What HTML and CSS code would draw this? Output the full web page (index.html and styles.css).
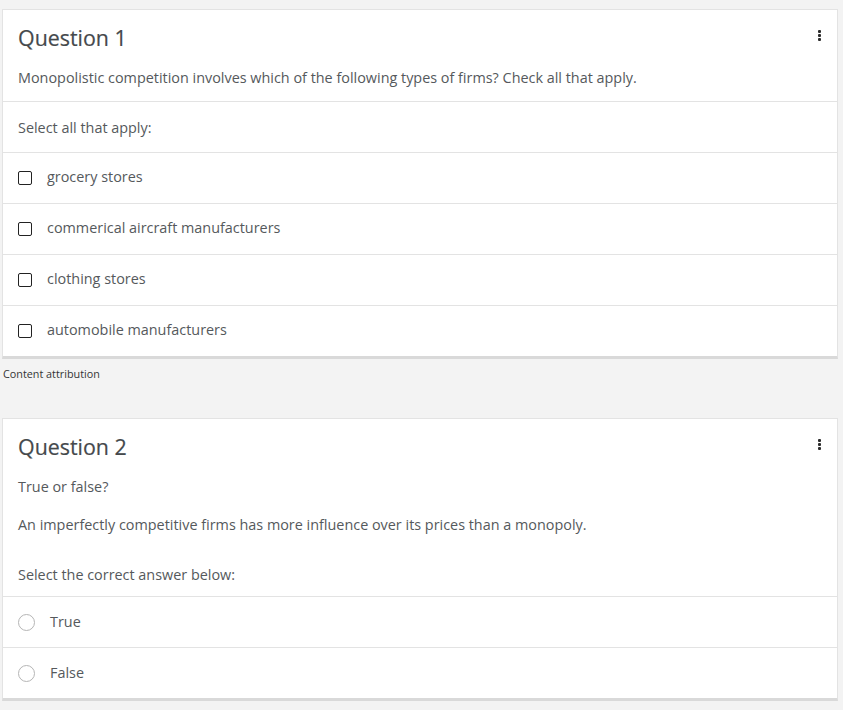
FILE: index.html
```html
<!DOCTYPE html>
<html lang="en">

<head>
    <meta charset="UTF-8">
    <meta name="viewport" content="width=device-width, initial-scale=1.0">
    <title>Quiz</title>
    <link rel="stylesheet" href="styles.css">
</head>

<body>

    <div class="question-card">
        <div class="question-head">
            <div class="title-row">
                <h2>Question 1</h2>
                <span class="kebab"><i></i><i></i><i></i></span>
            </div>
            <p class="prompt">Monopolistic competition involves which of the following types of firms? Check all that apply.</p>
        </div>
        <div class="row instruction">Select all that apply:</div>
        <label class="row option"><span class="box"></span>grocery stores</label>
        <label class="row option"><span class="box"></span>commerical aircraft manufacturers</label>
        <label class="row option"><span class="box"></span>clothing stores</label>
        <label class="row option"><span class="box"></span>automobile manufacturers</label>
    </div>
    <div class="attribution">Content attribution</div>

    <div class="question-card second">
        <div class="question-head">
            <div class="title-row">
                <h2>Question 2</h2>
                <span class="kebab"><i></i><i></i><i></i></span>
            </div>
            <p class="prompt">True or false?</p>
            <p class="prompt statement">An imperfectly competitive firms has more influence over its prices than a monopoly.</p>
            <p class="prompt select-note">Select the correct answer below:</p>
        </div>
        <label class="row option radio-option"><span class="circle"></span>True</label>
        <label class="row option radio-option"><span class="circle"></span>False</label>
    </div>

</body>

</html>
```

FILE: styles.css
```css
body {
    font-family: "Open Sans", Arial, sans-serif;
    background-color: #f3f3f3;
    color: #55595c;
    margin: 0;
    padding: 9px 5px 0 2px;
}

.question-card {
    background-color: #fff;
    border: 1px solid #e3e3e3;
    border-bottom: 3px solid #d9d9d9;
}

.question-card.second {
    margin-top: 37px;
}

.question-head {
    padding: 13px 15px 13px 15px;
}

.title-row {
    display: flex;
    justify-content: space-between;
    align-items: center;
}

h2 {
    margin: 0;
    font-size: 21.4px;
    font-weight: 400;
    line-height: 30px;
    color: #45494c;
    -webkit-text-stroke: 0.2px #45494c;
}

.kebab {
    display: flex;
    flex-direction: column;
    gap: 1px;
    margin-right: 1px;
    margin-top: -6px;
}

.kebab i {
    display: block;
    width: 3px;
    height: 3px;
    background-color: #2b2b2b;
    border-radius: 1px;
}

.prompt {
    margin: 15px 0 0;
    font-size: 14.4px;
    line-height: 20px;
}

.prompt.statement {
    margin-top: 18px;
}

.prompt.select-note {
    margin-top: 30px;
    margin-bottom: -2px;
}

.row {
    display: flex;
    align-items: center;
    padding: 15px 15px;
    font-size: 14.4px;
    line-height: 20px;
    border-top: 1px solid #e3e3e3;
}

.instruction {
    padding-top: 16px;
    padding-bottom: 14px;
}

.option {
    padding-top: 14px;
    padding-bottom: 16px;
}

.box {
    width: 12px;
    height: 12px;
    border: 1.5px solid #222;
    border-radius: 2px;
    margin-right: 15px;
    flex-shrink: 0;
    margin-top: 2px;
}

.radio-option {
    padding-top: 15px;
    padding-bottom: 15px;
}

.circle {
    width: 15px;
    height: 15px;
    border: 1px solid #b5b5b5;
    border-radius: 50%;
    margin-right: 15px;
    flex-shrink: 0;
}

.attribution {
    font-size: 10.8px;
    color: #333;
    padding: 8px 0 0 1px;
    line-height: 14px;
}
```
